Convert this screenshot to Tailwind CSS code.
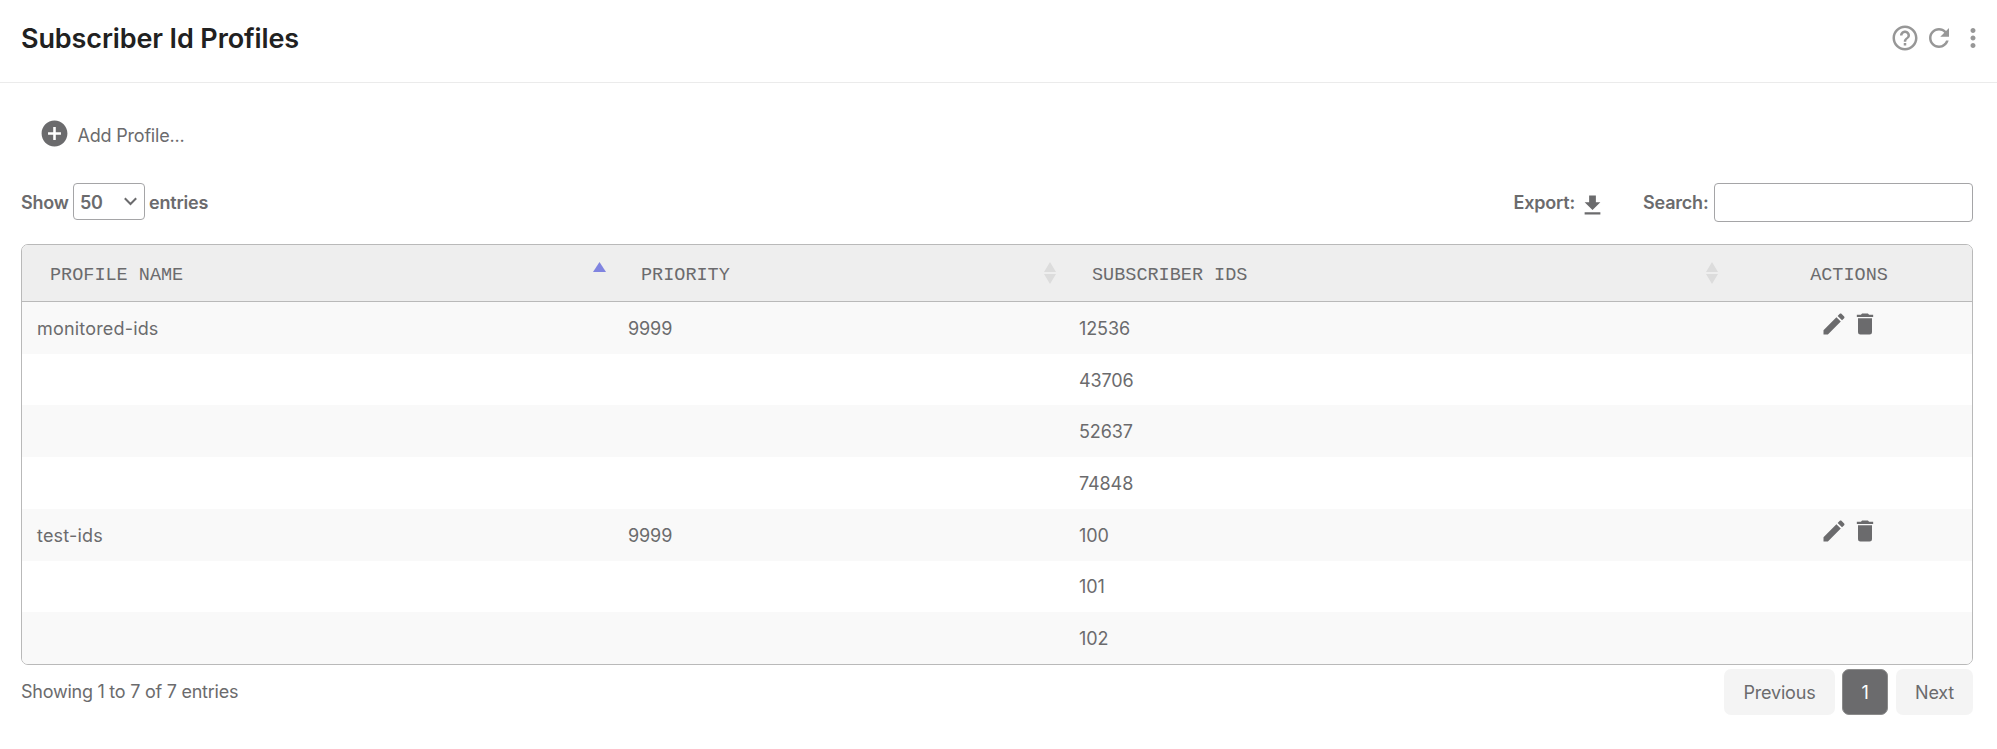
<!DOCTYPE html>
<html lang="en">
<head>
  <meta charset="UTF-8" />
  <meta name="viewport" content="width=device-width, initial-scale=1.0" />
  <title>Subscriber Id Profiles</title>
  <script src="https://cdn.jsdelivr.net/npm/@tailwindcss/browser@4"></script>
</head>
<body class="bg-white font-['Inter','Liberation_Sans',sans-serif] text-[18px] leading-6 text-[#6b6b6d] overflow-hidden">

  <header class="flex h-[83px] items-start justify-between border-b border-[#ebebeb] pl-[21px] pr-[9px] pt-[23px]">
    <h1 class="mt-px text-[27px] leading-[30px] font-semibold text-[#212121] tracking-[-0.12px]">Subscriber Id Profiles</h1>
    <div class="flex text-[#979797]">
      <svg class="size-[30px] mr-[4px]" viewBox="0 0 24 24" fill="currentColor"><path d="M11 18h2v-2h-2v2zm1-16C6.48 2 2 6.48 2 12s4.480 10 10 10 10-4.480 10-10S17.520 2 12 2zm0 18c-4.410 0-8-3.590-8-8s3.590-8 8-8 8 3.590 8 8-3.590 8-8 8zm0-14c-2.210 0-4 1.790-4 4h2c0-1.100.9-2 2-2s2 .9 2 2c0 2-3 1.750-3 5h2c0-2.250 3-2.500 3-5 0-2.210-1.790-4-4-4z"/></svg>
      <svg class="size-[30px] mr-[4px]" viewBox="0 0 24 24" fill="currentColor"><path d="M17.650 6.350C16.200 4.900 14.210 4 12 4c-4.420 0-7.990 3.580-7.990 8s3.570 8 7.990 8c3.730 0 6.840-2.550 7.730-6h-2.080c-.82 2.330-3.040 4-5.650 4-3.310 0-6-2.690-6-6s2.690-6 6-6c1.660 0 3.140.69 4.220 1.780L13 11h7V4l-2.350 2.350z"/></svg>
      <svg class="size-[30px]" viewBox="0 0 24 24" fill="currentColor"><path d="M12 8c1.100 0 2-.9 2-2s-.9-2-2-2-2 .9-2 2 .9 2 2 2zm0 2c-1.100 0-2 .9-2 2s.9 2 2 2 2-.9 2-2-.9-2-2-2zm0 6c-1.100 0-2 .9-2 2s.9 2 2 2 2-.9 2-2-.9-2-2-2z"/></svg>
    </div>
  </header>

  <main class="pl-[21px] pr-6">
    <div class="flex h-[100px] items-start pl-[17.500px] pt-[35px]">
      <svg class="size-[31px]" viewBox="0 0 24 24" fill="currentColor"><path d="M12 2C6.480 2 2 6.480 2 12s4.480 10 10 10 10-4.480 10-10S17.520 2 12 2zm5 11h-4v4h-2v-4H7v-2h4V7h2v4h4v2z"/></svg>
      <span class="ml-[8px] mt-[6px] tracking-[-0.2px]">Add Profile...</span>
    </div>

    <!-- Length, export and search controls -->
    <div class="flex h-[61px] items-start justify-between font-semibold">
      <div class="flex items-start tracking-[-0.2px]">
        <span class="mt-[8px] w-[52px]">Show</span>
        <div class="flex h-[37px] w-[72px] items-center justify-between rounded-[4px] border border-[#a5a5a7] pl-[6px] pr-[7px]">
          <span class="mt-[3px]">50</span>
          <svg class="h-[9px] w-[13px]" viewBox="0 0 13 9" fill="none" stroke="currentColor" stroke-width="2"><path d="M0.8 1.200L6.500 7L12.200 1.200"/></svg>
        </div>
        <span class="mt-[8px] ml-1">entries</span>
      </div>
      <div class="flex items-start tracking-[-0.2px]">
        <span class="mt-[8px]">Export:</span>
        <svg class="mt-[9px] ml-[4px] mr-[37px] size-[27px]" viewBox="0 0 24 24" fill="currentColor"><path d="M5,20H19V18H5M19,9H15V3H9V9H5L12,16L19,9Z"/></svg>
        <span class="mt-[8px] w-[71px]">Search:</span>
        <input type="text" class="h-[39px] w-[259px] rounded-[4px] border border-[#a5a5a7] bg-white" />
      </div>
    </div>

    <div class="overflow-hidden rounded-[7px] border border-[#b9b9b9]">
      <div class="grid h-[57px] grid-cols-[591px_451px_662px_1fr] items-center border-b border-[#b9b9b9] bg-[#eeeeee] font-['Liberation_Mono',monospace] text-[18.5px]">
        <div class="flex items-center justify-between pl-7 pr-[7px]">
          <span class="pt-1.5">PROFILE NAME</span>
          <svg class="h-[22px] w-[13px]" viewBox="0 0 13 22"><path fill="#8084e0" d="M6.500 0L13 10H0z"/></svg>
        </div>
        <div class="flex items-center justify-between pl-7 pr-2">
          <span class="pt-1.5">PRIORITY</span>
          <svg class="h-[22px] w-[12px]" viewBox="0 0 12 22" fill="#dcdcdc"><path d="M6 0L12 10H0zM0 12H12L6 22z"/></svg>
        </div>
        <div class="flex items-center justify-between pl-7 pr-2">
          <span class="pt-1.5">SUBSCRIBER IDS</span>
          <svg class="h-[22px] w-[12px]" viewBox="0 0 12 22" fill="#dcdcdc"><path d="M6 0L12 10H0zM0 12H12L6 22z"/></svg>
        </div>
        <div class="pt-1.5 text-center">ACTIONS</div>
      </div>
      <div id="rows" class="grid h-[362px] grid-rows-7"></div>
    </div>

    <div class="flex items-start justify-between pt-[4px]">
      <span class="mt-[11px] tracking-[-0.25px]">Showing 1 to 7 of 7 entries</span>
      <div class="flex h-[46px] tracking-[-0.2px]">
        <button class="w-[111px] rounded-[7px] bg-[#f4f4f4] pt-[2px]">Previous</button>
        <button class="ml-[7px] w-[46px] rounded-[7px] border border-[#8b8b8b] bg-[#6b6b6d] pt-[2px] text-white">1</button>
        <button class="ml-[8px] w-[77px] rounded-[7px] bg-[#f4f4f4] pt-[2px]">Next</button>
      </div>
    </div>
  </main>

  <script>
    const profiles = [
      { name: "monitored-ids", priority: 9999, ids: [12536, 43706, 52637, 74848] },
      { name: "test-ids", priority: 9999, ids: [100, 101, 102] },
    ];

    const actions = `
      <svg class="size-7" viewBox="0 0 24 24" fill="currentColor"><path d="M20.710,7.040C21.100,6.650 21.100,6 20.710,5.630L18.370,3.290C18,2.900 17.350,2.900 16.960,3.290L15.120,5.120L18.870,8.870M3,17.250V21H6.750L17.810,9.930L14.060,6.180L3,17.250Z"/></svg>
      <svg class="size-7 ml-[3px]" viewBox="0 0 24 24" fill="currentColor"><path d="M19,4H15.500L14.500,3H9.500L8.500,4H5V6H19M6,19A2,2 0 0,0 8,21H16A2,2 0 0,0 18,19V7H6V19Z"/></svg>`;

    // Name, priority and actions are shown on the first id of each profile only
    document.getElementById("rows").innerHTML = profiles.flatMap((p) =>
      p.ids.map((id, i) => `
        <div class="grid grid-cols-[591px_451px_662px_1fr] items-center tracking-[-0.1px] odd:bg-[#f9f9f9]">
          <div class="pl-[15px] pt-[2px] tracking-[0.18px]">${i ? "" : p.name}</div>
          <div class="pl-[15px] pt-[2px]">${i ? "" : p.priority}</div>
          <div class="pl-[15px] pt-[2px]">${id}</div>
          <div class="flex justify-center pb-[7px]">${i ? "" : actions}</div>
        </div>`)
    ).join("");
  </script>
</body>
</html>
